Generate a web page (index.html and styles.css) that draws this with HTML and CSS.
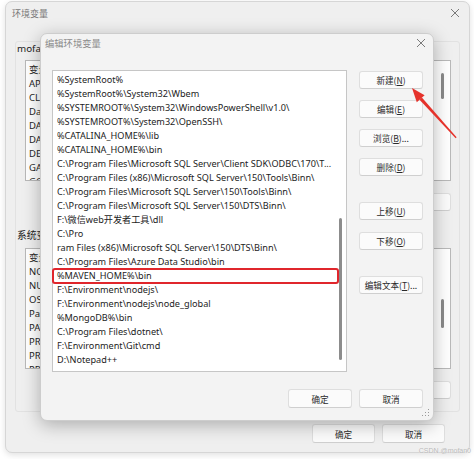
FILE: index.html
```html
<!DOCTYPE html>
<html lang="zh">
<head>
<meta charset="utf-8">
<link rel="stylesheet" href="styles.css">
</head>
<body>
<div class="desk">
  <div class="win outer">
    <div class="titlebar">
      <span class="title">环境变量</span>
      <svg class="close" width="10" height="10" viewBox="0 0 10 10"><path d="M1 1L9 9M9 1L1 9" stroke="#7a7a7a" stroke-width="1"/></svg>
    </div>
    <div class="panel">
      <div class="section">
        <div class="caption">mofan 的用户变量(<u>U</u>)</div>
        <div class="lv user">
          <div class="lvhead"><span class="c1">变量</span><span>值</span></div>
          <div class="lvrow"><span class="c1">APPDATA</span></div>
          <div class="lvrow"><span class="c1">CLASSPATH</span></div>
          <div class="lvrow"><span class="c1">DataGrip</span></div>
          <div class="lvrow"><span class="c1">DATAGRIP</span></div>
          <div class="lvrow"><span class="c1">DATA_HOME</span></div>
          <div class="lvrow"><span class="c1">DERBY_HOME</span></div>
          <div class="lvrow"><span class="c1">GATEWAY</span></div>
          <div class="lvrow"><span class="c1">GOPATH</span></div>
          <div class="osb t1"></div>
        </div>
        <div class="btnrow">
          <span class="btn">新建(<u>N</u>)...</span>
          <span class="btn">编辑(<u>E</u>)...</span>
          <span class="btn">删除(<u>D</u>)</span>
        </div>
      </div>
      <div class="section s2">
        <div class="caption">系统变量(<u>S</u>)</div>
        <div class="lv sys">
          <div class="lvhead"><span class="c1">变量</span><span>值</span></div>
          <div class="lvrow"><span class="c1">NODE_PATH</span></div>
          <div class="lvrow"><span class="c1">NUMBER_OF_PROCESSORS</span></div>
          <div class="lvrow"><span class="c1">OS</span></div>
          <div class="lvrow"><span class="c1">Path</span></div>
          <div class="lvrow"><span class="c1">PATHEXT</span></div>
          <div class="lvrow"><span class="c1">PROCESSOR_ARCHITECTURE</span></div>
          <div class="lvrow"><span class="c1">PROCESSOR_IDENTIFIER</span></div>
          <div class="lvrow"><span class="c1">PROCESSOR_LEVEL</span></div>
          <div class="osb t2"></div>
        </div>
        <div class="btnrow">
          <span class="btn">新建(<u>W</u>)...</span>
          <span class="btn">编辑(<u>I</u>)...</span>
          <span class="btn">删除(<u>L</u>)</span>
        </div>
      </div>
    </div>
    <div class="footer outerfoot">
      <span class="btn fbtn">确定</span>
      <span class="btn fbtn">取消</span>
    </div>
  </div>

  <div class="win inner">
    <div class="titlebar ititle">
      <span class="title">编辑环境变量</span>
      <svg class="close" width="10" height="10" viewBox="0 0 10 10"><path d="M1 1L9 9M9 1L1 9" stroke="#7a7a7a" stroke-width="1"/></svg>
    </div>
    <div class="main">
      <div class="plist">
        <div class="prow">%SystemRoot%</div>
        <div class="prow">%SystemRoot%\System32\Wbem</div>
        <div class="prow">%SYSTEMROOT%\System32\WindowsPowerShell\v1.0\</div>
        <div class="prow">%SYSTEMROOT%\System32\OpenSSH\</div>
        <div class="prow">%CATALINA_HOME%\lib</div>
        <div class="prow">%CATALINA_HOME%\bin</div>
        <div class="prow">C:\Program Files\Microsoft SQL Server\Client SDK\ODBC\170\T...</div>
        <div class="prow">C:\Program Files (x86)\Microsoft SQL Server\150\Tools\Binn\</div>
        <div class="prow">C:\Program Files\Microsoft SQL Server\150\Tools\Binn\</div>
        <div class="prow">C:\Program Files\Microsoft SQL Server\150\DTS\Binn\</div>
        <div class="prow">F:\微信web开发者工具\dll</div>
        <div class="prow">C:\Pro</div>
        <div class="prow">ram Files (x86)\Microsoft SQL Server\150\DTS\Binn\</div>
        <div class="prow">C:\Program Files\Azure Data Studio\bin</div>
        <div class="prow hl">%MAVEN_HOME%\bin</div>
        <div class="prow">F:\Environment\nodejs\</div>
        <div class="prow">F:\Environment\nodejs\node_global</div>
        <div class="prow">%MongoDB%\bin</div>
        <div class="prow">C:\Program Files\dotnet\</div>
        <div class="prow">F:\Environment\Git\cmd</div>
        <div class="prow">D:\Notepad++</div>
        <div class="psb"></div>
      </div>
      <div class="bcol">
        <span class="btn cbtn">新建(<u>N</u>)</span>
        <span class="btn cbtn">编辑(<u>E</u>)</span>
        <span class="btn cbtn">浏览(<u>B</u>)...</span>
        <span class="btn cbtn">删除(<u>D</u>)</span>
        <span class="btn cbtn sep">上移(<u>U</u>)</span>
        <span class="btn cbtn dn">下移(<u>O</u>)</span>
        <span class="btn cbtn sep">编辑文本(<u>T</u>)...</span>
      </div>
    </div>
    <div class="footer innerfoot">
      <span class="btn fbtn">确定</span>
      <span class="btn fbtn">取消</span>
    </div>
    <svg class="grip" width="8" height="8" viewBox="0 0 8 8"><g fill="#9a9a9a"><rect x="6" y="0" width="1" height="1"/><rect x="6" y="3" width="1" height="1"/><rect x="3" y="3" width="1" height="1"/><rect x="6" y="6" width="1" height="1"/><rect x="3" y="6" width="1" height="1"/><rect x="0" y="6" width="1" height="1"/></g></svg>
  </div>

  <svg class="arrow" width="474" height="459" viewBox="0 0 474 459">
    <polygon points="412,88 424.6,95.2 416.8,102.2" fill="#e5322b"/>
    <polygon points="419.5,99.8 421.9,97.6 456.6,137.3 455.6,138.2" fill="#e5322b"/>
  </svg>
  <div class="watermark">CSDN @mofan0</div>
</div>
</body>
</html>
```
FILE: styles.css
```css
* { box-sizing: border-box; }
html, body { margin: 0; padding: 0; }
body {
  width: 474px;
  height: 459px;
  background: #ffffff;
  font-family: "Noto Sans", "Noto Sans CJK SC", sans-serif;
  color: #1f1f1f;
  overflow: hidden;
}
.desk { position: relative; width: 474px; height: 459px; }

.win {
  position: absolute;
  display: flex;
  flex-direction: column;
  border: 1px solid #d6d6d6;
  border-radius: 7px;
}
.outer {
  left: 5px; top: 1px; width: 465px; height: 452px;
  background: #efefef;
  box-shadow: 0 2px 6px rgba(0,0,0,0.12);
}
.inner {
  left: 40px; top: 33px; width: 394px; height: 388px;
  background: #f3f3f3;
  border-color: #cdcdcd;
  box-shadow: 0 4px 18px rgba(0,0,0,0.28);
}

.titlebar {
  height: 22px;
  display: flex;
  align-items: center;
  justify-content: space-between;
  padding: 0 9px 0 6px;
  flex: none;
}
.title {
  font-family: "Noto Sans CJK SC", sans-serif;
  font-size: 9px;
  color: #777;
}
.ititle { height: 18px; padding: 0 7px 0 4px; }
.ititle .title { font-size: 9.3px; color: #8a8a8a; }

.panel {
  margin: 17px 9px 0 9px;
  border: 1px solid #e2e2e2;
  border-radius: 3px;
  padding: 0 8px 12px 1px;
  flex: none;
}
.caption {
  height: 14px;
  line-height: 14px;
  font-size: 9.8px;
  font-family: "Noto Sans", "Noto Sans CJK SC", sans-serif;
  color: #222;
  margin-bottom: 4px;
  white-space: nowrap;
}
.s2 { margin-top: 18px; }
.s2 .caption { margin-bottom: 5px; }

.lv {
  position: relative;
  margin-left: 8px;
  height: 121px;
  background: #ffffff;
  border: 1px solid #b9b9b9;
  overflow: hidden;
  font-size: 9.5px;
}
.lvhead, .lvrow {
  display: flex;
  height: 14px;
  line-height: 14px;
  padding-left: 3px;
  white-space: nowrap;
}
.lvhead { height: 16px; line-height: 16px; font-family: "Noto Sans CJK SC", sans-serif; }
.c1 { width: 150px; }
.osb {
  position: absolute;
  right: 6px;
  width: 3px;
  border-radius: 2px;
  background: #8a8a8a;
}
.t1 { top: 12px; height: 26px; }
.t2 { top: 50px; height: 29px; }

.btnrow {
  display: flex;
  justify-content: flex-end;
  gap: 8px;
  margin-top: 12px;
}
.btn {
  display: flex;
  align-items: center;
  justify-content: center;
  height: 18px;
  width: 64px;
  background: #fbfbfb;
  border: 1px solid #dedede;
  border-bottom-color: #cfcfcf;
  border-radius: 3px;
  font-family: "Noto Sans CJK SC", sans-serif;
  font-size: 8.6px;
  color: #2a2a2a;
  white-space: nowrap;
}
.btn u { text-underline-offset: 1px; }

.footer {
  display: flex;
  justify-content: flex-end;
  gap: 7px;
  flex: none;
}
.fbtn { height: 19px; width: 64px; }
.outerfoot { margin-top: 12px; padding-right: 24px; }
.outerfoot .fbtn { width: 63px; }
.innerfoot { margin-top: 17px; padding-right: 10px; }

.main {
  display: flex;
  margin-top: 18px;
  padding-left: 11px;
  gap: 12px;
  flex: none;
}
.plist {
  position: relative;
  width: 295px;
  height: 302px;
  background: #ffffff;
  border: 1px solid #c6c6c6;
  padding: 2px 0 0 4px;
  font-size: 9.15px;
  color: #1c1c1c;
}
.prow {
  height: 14px;
  line-height: 14px;
  white-space: nowrap;
  overflow: hidden;
}
.hl {
  margin: 0 8px 0 -4px;
  padding-left: 4px;
  outline: 2px solid #e0262c;
  outline-offset: -1px;
  border-radius: 2px;
}
.psb {
  position: absolute;
  right: 4px;
  top: 147px;
  width: 3px;
  height: 142px;
  border-radius: 2px;
  background: #8c8c8c;
}
.bcol {
  display: flex;
  flex-direction: column;
  gap: 11px;
  padding-top: 1px;
}
.cbtn { height: 18px; }
.sep { margin-top: 15px; }
.dn { margin-top: 1px; }

.grip { position: absolute; right: 3px; bottom: 3px; }

.arrow { position: absolute; left: 0; top: 0; pointer-events: none; }

.watermark {
  position: absolute;
  right: 3px;
  top: 447px;
  font-family: "Liberation Sans", sans-serif;
  font-size: 7px;
  color: #b8b8b8;
  text-shadow: 0 0 1px #fff;
}
```
